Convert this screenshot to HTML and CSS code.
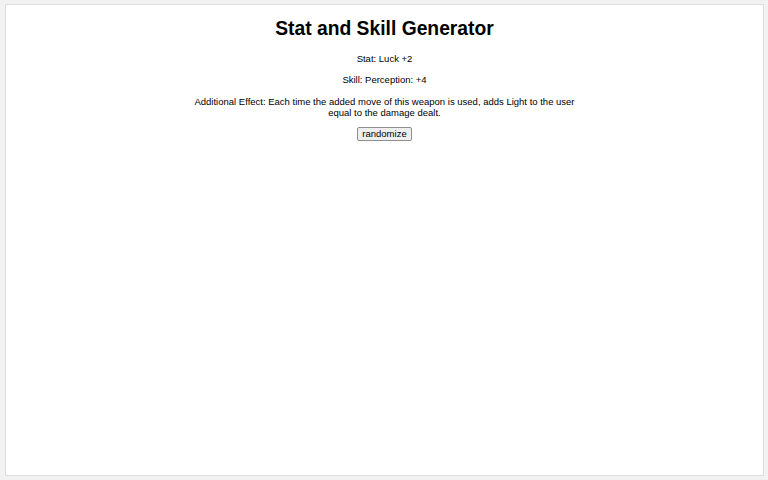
FILE: index.html
```html
<!DOCTYPE html>
<html lang="en">
<head>
<meta charset="utf-8">
<title>Stat and Skill Generator</title>
<link rel="stylesheet" href="styles.css">
</head>
<body>
  <main class="card">
    <h1 class="title">Stat and Skill Generator</h1>
    <p class="line">Stat: Luck +2</p>
    <p class="line">Skill: Perception: +4</p>
    <p class="line effect">Additional Effect: Each time the added move of this weapon is used, adds Light to the user equal to the damage dealt.</p>
    <button class="roll" type="button">randomize</button>
  </main>
</body>
</html>
```
FILE: styles.css
```css
html, body {
  margin: 0;
  height: 100%;
}

body {
  background: #f2f2f2;
  padding: 4px 4px 4px 5px;
  box-sizing: border-box;
  font-family: "Liberation Sans", Arial, sans-serif;
  color: #000;
}

.card {
  background: #fff;
  border: 1px solid #dcdcdc;
  height: 100%;
  box-sizing: border-box;
  display: flex;
  flex-direction: column;
  align-items: center;
  text-align: center;
  padding-top: 13px;
}

.title {
  font-size: 19.3px;
  line-height: 22px;
  font-weight: bold;
  margin: 0 0 12.5px;
}

.line {
  font-size: 9.5px;
  line-height: 11px;
  margin: 0 0 10.5px;
}

.effect {
  max-width: 395px;
  margin-bottom: 9.5px;
}

.roll {
  font-family: "Liberation Sans", Arial, sans-serif;
  font-size: 9.5px;
  line-height: 10px;
  padding: 1px 4px;
  border: 1px solid #8f8f8f;
  border-radius: 2px;
  background: #efefef;
  color: #000;
}
```
